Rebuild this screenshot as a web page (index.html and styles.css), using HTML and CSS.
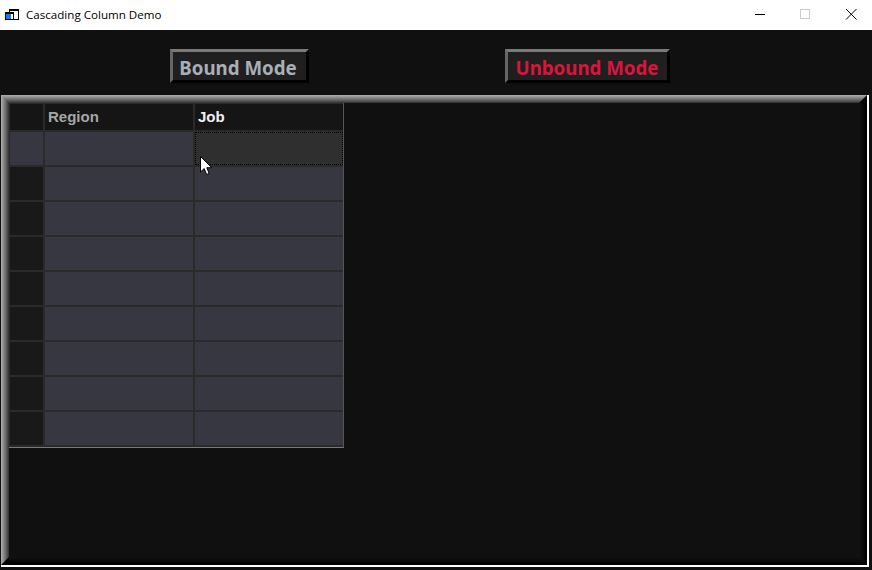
FILE: index.html
```html
<!DOCTYPE html>
<html lang="en">
<head>
    <meta charset="UTF-8">
    <title>Cascading Column Demo</title>
    <link rel="stylesheet" href="styles.css">
</head>
<body>
    <div class="titlebar">
        <svg class="app-icon" width="14" height="11" viewBox="0 0 14 11">
            <path d="M4 0h10v11H8v-1h5V2H5v1H4z" fill="#000"/>
            <path d="M0 3h9v8H0z" fill="#000"/>
            <path d="M1 5h5v5H1z" fill="#1a78f0"/>
            <path d="M6 5h2v5H6z" fill="#fff"/>
        </svg>
        <span class="title">Cascading Column Demo</span>
        <div class="controls">
            <svg width="46" height="30" viewBox="0 0 46 30"><path d="M19 14.500h10" stroke="#000"/></svg>
            <svg width="46" height="30" viewBox="0 0 46 30"><rect x="18.500" y="9.500" width="9" height="9" fill="none" stroke="#ccc"/></svg>
            <svg width="46" height="30" viewBox="0 0 46 30"><path d="M18 9l10.500 10.500M28.500 9L18 19.500" stroke="#000" fill="none"/></svg>
        </div>
    </div>

    <div class="toolbar">
        <button class="mode-btn bound">Bound Mode</button>
        <button class="mode-btn unbound">Unbound Mode</button>
    </div>

    <div class="panel">
        <div class="grid">
            <div class="head"></div><div class="head region">Region</div><div class="head job">Job</div>
            <div class="row-head current"></div><div class="cell"></div><div class="cell selected"></div>
            <div class="row-head"></div><div class="cell"></div><div class="cell"></div>
            <div class="row-head"></div><div class="cell"></div><div class="cell"></div>
            <div class="row-head"></div><div class="cell"></div><div class="cell"></div>
            <div class="row-head"></div><div class="cell"></div><div class="cell"></div>
            <div class="row-head"></div><div class="cell"></div><div class="cell"></div>
            <div class="row-head"></div><div class="cell"></div><div class="cell"></div>
            <div class="row-head"></div><div class="cell"></div><div class="cell"></div>
            <div class="row-head"></div><div class="cell"></div><div class="cell"></div>
        </div>
    </div>

    <svg class="cursor" width="13" height="20" viewBox="0 0 13 20">
        <path d="M.5.5v15.500l3.700-3.400 2.400 5.900 2.600-1.100-2.400-5.700h5z" fill="#fff" stroke="#000"/>
    </svg>
</body>
</html>
```
FILE: styles.css
```css
html, body {
    margin: 0;
    height: 570px;
    overflow: hidden;
}
body {
    background-color: #101010;
    font-family: "Liberation Sans", Arial, sans-serif;
}
.titlebar {
    height: 30px;
    background-color: #fff;
    display: flex;
    align-items: center;
    color: #000;
}
.app-icon {
    margin-left: 5px;
    margin-top: -2px;
}
.title {
    margin-left: 7px;
    margin-top: -1px;
    font-family: "Open Sans", sans-serif;
    font-size: 11.6px;
}
.controls {
    margin-left: auto;
    margin-right: -2px;
    display: flex;
}
.controls svg {
    display: block;
}
.toolbar {
    height: 65px;
    box-sizing: border-box;
    padding: 19px 0 0 170px;
    display: flex;
    align-items: flex-start;
    gap: 196px;
}
.mode-btn {
    height: 34px;
    padding: 2px 3px 0 0;
    box-sizing: border-box;
    border-style: solid;
    border-width: 3px;
    border-color: #7a7a7a #000 #000 #666;
    background-color: #1f1f1f;
    font-family: "Noto Sans", sans-serif;
    font-weight: 700;
    font-size: 18.7px;
}
.bound {
    width: 139px;
    color: #a8afb6;
}
.unbound {
    width: 165px;
    padding-right: 1px;
    color: #dc143c;
}
.panel {
    position: relative;
    margin-left: 1px;
    width: 868px;
    height: 472px;
    box-sizing: border-box;
    padding: 8px;
    background-color: #101010;
    border-right: 2px solid #fff;
    border-bottom: 2px solid #fff;
    box-shadow:
        inset 1px 1px 0 #a8a8a8,
        inset 2px 2px 0 #9a9a9a,
        inset 3px 3px 0 #8a8a8a,
        inset 4px 4px 0 #7c7c7c,
        inset 5px 5px 0 #6c6c6c,
        inset 6px 6px 0 #5c5c5c,
        inset 7px 7px 0 #4c4c4c,
        inset 8px 8px 0 #383838,
        inset -1px -1px 0 #000,
        inset -2px -2px 0 #020202,
        inset -3px -3px 0 #040404,
        inset -4px -4px 0 #070707,
        inset -5px -5px 0 #0a0a0a,
        inset -6px -6px 0 #0c0c0c,
        inset -7px -7px 0 #0e0e0e;
}
/* mitred corners of the bevel */
.panel::before,
.panel::after {
    content: "";
    position: absolute;
    width: 8px;
    height: 8px;
    background-color: #050505;
}
.panel::before {
    top: 0;
    right: 0;
    clip-path: polygon(100% 0, 100% 100%, 0 100%);
}
.panel::after {
    left: 0;
    bottom: 0;
    clip-path: polygon(100% 0, 100% 100%, 0 100%);
}
.grid {
    width: 335px;
    height: 345px;
    box-sizing: border-box;
    display: grid;
    grid-template-columns: 33px 148px 148px;
    grid-template-rows: 26px repeat(9, 33px);
    gap: 2px;
    background-color: #2a2a2a;
    border-right: 1px solid #55555c;
    border-bottom: 1px solid #77777c;
    padding: 1px 0 1px 1px;
}
.head {
    background-color: #151515;
    font-size: 15px;
    font-weight: 700;
    line-height: 25px;
    padding-left: 3px;
}
.region {
    color: #a6a6a6;
}
.job {
    color: #f0f0f0;
}
.row-head {
    background-color: #191919;
}
.row-head.current {
    background-color: #373741;
}
.cell {
    background-color: #373741;
}
.cell.selected {
    box-sizing: border-box;
    background-color: #2f2f2f;
    border: 1px dotted #000;
}
.cursor {
    position: absolute;
    left: 200px;
    top: 156px;
}
```
